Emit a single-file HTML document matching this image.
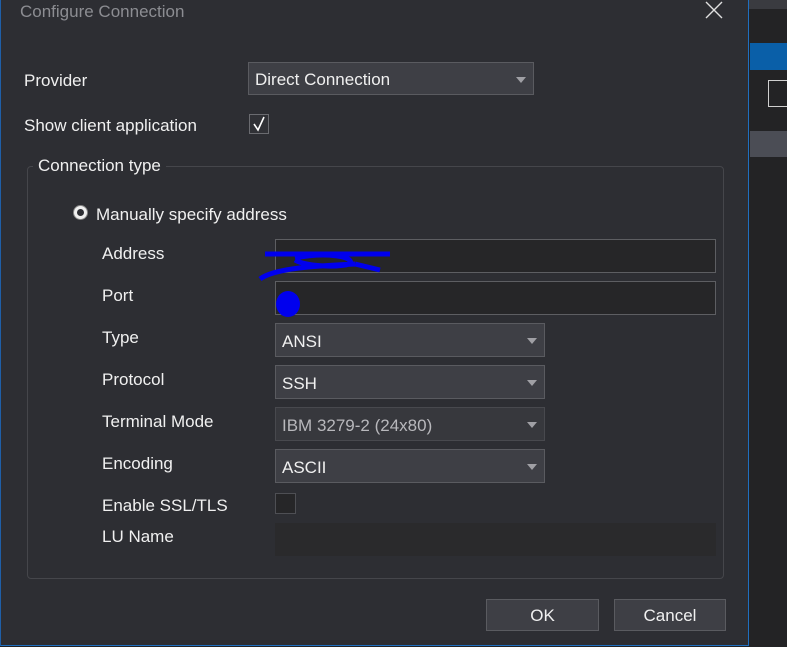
<!DOCTYPE html>
<html><head><style>
*{margin:0;padding:0;box-sizing:border-box}
body{width:787px;height:647px;background:#232325;position:relative;overflow:hidden;font-family:"Liberation Sans",sans-serif;color:#f0f0f0;font-size:17px}
.a{position:absolute}
.dlg{left:0;top:0;width:749px;height:646px;background:#2d2e33;border-right:1px solid #1f6fc0;border-left:1px solid #1f5fa8;border-bottom:1px solid #1f6fc0}
.lbl{position:absolute;font-size:17px;color:#f0f0f0;white-space:nowrap}
.combo{position:absolute;background:#3e3f45;border:1px solid #5a5b60;height:34px;font-size:17px;padding:8px 0 0 6px;color:#f0f0f0}
.combo:after{content:"";position:absolute;right:7px;top:14px;border-left:5px solid transparent;border-right:5px solid transparent;border-top:6px solid #a0a0a5}
.tb{position:absolute;background:#262628;border:1px solid #5d5e62;height:34px}
.btn{position:absolute;background:#3e3f45;border:1px solid #5a5b60;height:32px;text-align:center;font-size:17px;padding-top:6px}
</style></head><body>
<div class="a" style="left:749px;top:0;width:38px;height:9px;background:#3a3b40"></div>
<div class="a" style="left:750px;top:43px;width:37px;height:27px;background:#0a5fa8"></div>
<div class="a" style="left:768px;top:80px;width:19px;height:27px;border:1px solid #d0d0d0;border-right:none;background:#232325"></div>
<div class="a" style="left:750px;top:131px;width:37px;height:26px;background:#4b4d55"></div>
<div class="a dlg"></div>
<div class="lbl" style="left:20px;top:2px;font-size:17px;color:#8c8d92">Configure Connection</div>
<svg class="a" style="left:704px;top:1px" width="20" height="18"><path d="M2 1 L18 17 M18 1 L2 17" stroke="#e0e0e0" stroke-width="1.4"/></svg>
<div class="lbl" style="left:24px;top:71px">Provider</div>
<div class="combo" style="left:248px;top:62px;width:286px;height:33px;padding-top:7px">Direct Connection</div>
<div class="lbl" style="left:24px;top:116px">Show client application</div>
<div class="a" style="left:249px;top:114px;width:20px;height:20px;border:1px solid #6a6b70;background:#303136"></div>
<svg class="a" style="left:249px;top:114px" width="20" height="20"><path d="M5 10 L9 16 L15 3" stroke="#fff" stroke-width="1.6" fill="none"/></svg>
<div class="a" style="left:27px;top:166px;width:697px;height:413px;border:1px solid #45464b;border-radius:4px"></div>
<div class="lbl" style="left:33px;top:156px;background:#2d2e33;padding:0 5px">Connection type</div>
<div class="a" style="left:73px;top:205px;width:15px;height:15px;border-radius:50%;background:#f0f0f0;border:1px solid #888"></div>
<div class="a" style="left:77px;top:209px;width:7px;height:7px;border-radius:50%;background:#2d2e33"></div>
<div class="lbl" style="left:96px;top:205px">Manually specify address</div>
<div class="lbl" style="left:102px;top:244px">Address</div>
<div class="tb" style="left:275px;top:239px;width:441px"></div>
<svg class="a" style="left:255px;top:246px" width="140" height="40"><path d="M10 8 H135 M40 12 C70 6 100 10 95 18 C80 22 50 20 40 14 M5 33 C20 22 60 20 100 18 M100 18 L125 24" stroke="#0000ee" stroke-width="5" fill="none"/></svg>
<div class="lbl" style="left:102px;top:286px">Port</div>
<div class="tb" style="left:275px;top:281px;width:441px"></div>
<div class="a" style="left:276px;top:291px;width:24px;height:26px;border-radius:50%;background:#0000ee"></div>
<div class="lbl" style="left:102px;top:328px">Type</div>
<div class="combo" style="left:275px;top:323px;width:270px">ANSI</div>
<div class="lbl" style="left:102px;top:370px">Protocol</div>
<div class="combo" style="left:275px;top:365px;width:270px">SSH</div>
<div class="lbl" style="left:102px;top:412px">Terminal Mode</div>
<div class="combo" style="left:275px;top:407px;width:270px;background:#37383d;border-color:#48494e;color:#b8b8bc">IBM 3279-2 (24x80)</div>
<div class="lbl" style="left:102px;top:454px">Encoding</div>
<div class="combo" style="left:275px;top:449px;width:270px">ASCII</div>
<div class="lbl" style="left:102px;top:496px">Enable SSL/TLS</div>
<div class="a" style="left:275px;top:493px;width:21px;height:21px;border:1px solid #4e4f54;background:#262628"></div>
<div class="lbl" style="left:102px;top:527px">LU Name</div>
<div class="a" style="left:275px;top:523px;width:441px;height:33px;background:#2a2a2c"></div>
<div class="btn" style="left:486px;top:599px;width:113px">OK</div>
<div class="btn" style="left:614px;top:599px;width:112px">Cancel</div>
</body></html>
